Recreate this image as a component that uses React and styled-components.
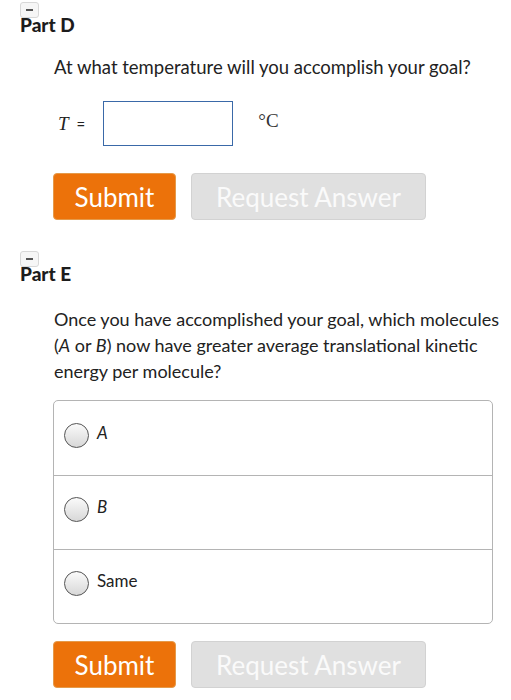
import React from 'react'
import styled, { createGlobalStyle } from 'styled-components'

const Global = createGlobalStyle`
  body {
    margin: 0;
    background: #fff;
    font-family: Lato, "Open Sans", sans-serif;
    color: #222;
  }
`

const App = () => {
  return (
    <Page>
      <Global />
      <Section>
        <PartHead>
          <Collapse />
          <PartTitle>Part D</PartTitle>
        </PartHead>
        <Body>
          <Question>At what temperature will you accomplish your goal?</Question>
          <AnswerRow>
            <MathVar>T</MathVar>
            <Eq>=</Eq>
            <Input />
            <Unit>°C</Unit>
          </AnswerRow>
          <Buttons $top={27}>
            <SubmitBtn>Submit</SubmitBtn>
            <RequestBtn>Request Answer</RequestBtn>
          </Buttons>
        </Body>
      </Section>
      <Section>
        <PartHead>
          <Collapse />
          <PartTitle>Part E</PartTitle>
        </PartHead>
        <Body>
          <Paragraph>
            Once you have accomplished your goal, which molecules (<Em>A</Em> or <Em>B</Em>) now
            have greater average translational kinetic energy per molecule?
          </Paragraph>
          <Choices>
            <Choice>
              <Radio />
              <Label><Em>A</Em></Label>
            </Choice>
            <Choice>
              <Radio />
              <Label><Em>B</Em></Label>
            </Choice>
            <Choice>
              <Radio />
              <Label>Same</Label>
            </Choice>
          </Choices>
          <Buttons $top={17}>
            <SubmitBtn>Submit</SubmitBtn>
            <RequestBtn>Request Answer</RequestBtn>
          </Buttons>
        </Body>
      </Section>
    </Page>
  )
}

export default App

const Page = styled.div`
  width: 511px;
  height: 700px;
  overflow: hidden;
  padding-top: 2px;
  box-sizing: border-box;
`

const Section = styled.div`
  margin-bottom: 31px;
`

const PartHead = styled.div`
  position: relative;
  padding-left: 20px;
  padding-top: 11px;
`

const Collapse = styled.div`
  position: absolute;
  left: 20px;
  top: 0;
  width: 17px;
  height: 14px;
  border: 1px solid #d8d8d8;
  border-radius: 3px;
  background: #f6f6f6;

  &::after {
    content: '';
    position: absolute;
    left: 5px;
    top: 6px;
    width: 7px;
    height: 2px;
    background: #555;
  }
`

const PartTitle = styled.div`
  position: relative;
  font-size: 19px;
  font-weight: 900;
  color: #1c1c1c;
  line-height: 23px;
`

const Body = styled.div`
  padding-left: 54px;
`

const Question = styled.div`
  margin-top: 19px;
  font-size: 18.5px;
  line-height: 24px;
`

const AnswerRow = styled.div`
  display: flex;
  align-items: center;
  margin-top: 22px;
  height: 45px;
`

const MathVar = styled.span`
  font-family: "Liberation Serif", serif;
  font-style: italic;
  font-size: 19px;
  margin-left: 4px;
`

const Eq = styled.span`
  font-size: 15px;
  margin-left: 8px;
`

const Input = styled.div`
  width: 128px;
  height: 43px;
  border: 1px solid #3a69a8;
  margin-left: 18px;
  background: #fff;
`

const Unit = styled.span`
  font-family: "Liberation Serif", serif;
  font-size: 19px;
  margin-left: 25px;
  margin-top: -6px;
  color: #333;
`

const Buttons = styled.div`
  display: flex;
  gap: 15px;
  margin-top: ${p => p.$top}px;
`

const BaseBtn = styled.div`
  height: 47px;
  border-radius: 4px;
  box-sizing: border-box;
  display: flex;
  align-items: center;
  justify-content: center;
  font-size: 26px;
`

const SubmitBtn = styled(BaseBtn)`
  width: 123px;
  margin-left: -1px;
  background: #ec720a;
  border: 1px solid #e59a4a;
  color: #fff;
`

const RequestBtn = styled(BaseBtn)`
  width: 235px;
  background: #e0e0e0;
  border: 1px solid #d2d2d2;
  color: #fafafa;
`

const Em = styled.i`
  font-style: italic;
`

const Paragraph = styled.div`
  margin-top: 21px;
  font-size: 18px;
  line-height: 26px;
  width: 446px;
`

const Choices = styled.div`
  margin-top: 16px;
  margin-left: -1px;
  width: 440px;
  border: 1px solid #b4b4b4;
  border-radius: 5px;
  box-sizing: border-box;
`

const Choice = styled.div`
  display: flex;
  align-items: center;
  height: 74px;
  padding-left: 10px;
  box-sizing: border-box;
  padding-bottom: 6px;

  & + & {
    border-top: 1px solid #b4b4b4;
  }
`

const Radio = styled.div`
  width: 23px;
  height: 23px;
  border-radius: 50%;
  border: 1px solid #555;
  background: linear-gradient(#fafafa, #d8d8d8);
`

const Label = styled.span`
  margin-left: 8px;
  margin-top: -6px;
  font-size: 17px;
  color: #222;
`
